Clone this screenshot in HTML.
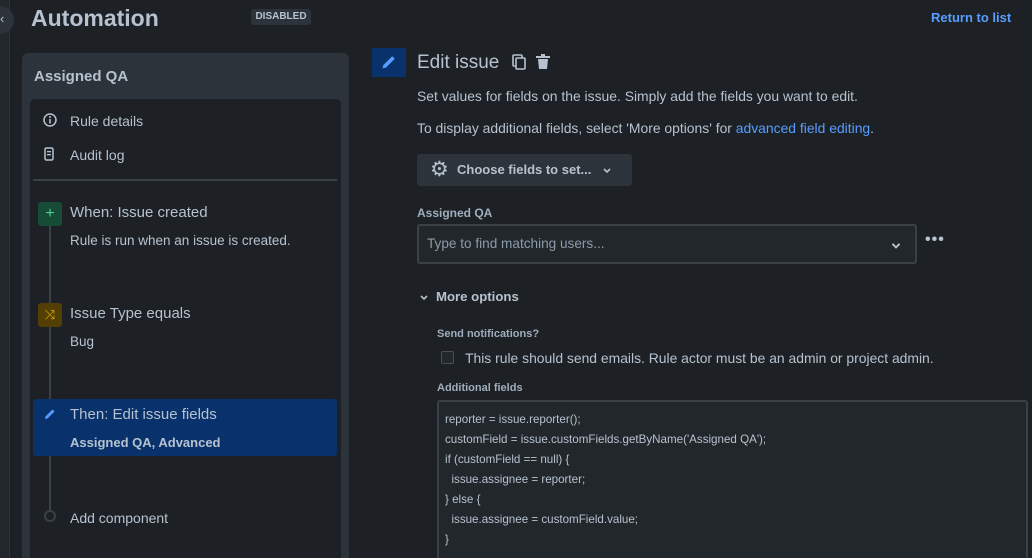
<!DOCTYPE html>
<html><head><style>
*{box-sizing:border-box;margin:0;padding:0}
html{width:1032px;height:558px;overflow:hidden}
body{width:1032px;height:558px;background:#1d2125;font-family:"Liberation Sans",sans-serif;color:#b6c2cf;position:relative;overflow:hidden;font-size:14px}
.a{position:absolute}
</style></head><body>
<div class="a" style="left:0;top:0;width:10px;height:558px;background:#22272b;border-right:1px solid #2c333a"></div>
<div class="a" style="left:-14px;top:6px;width:28px;height:28px;border-radius:50%;background:#2c333a"></div>
<div class="a" style="left:0;top:11px;font-size:13px;color:#b6c2cf">‹</div>
<div class="a" style="left:31px;top:5px;font-size:23px;font-weight:bold;color:#b6c2cf">Automation</div>
<div class="a" style="left:251px;top:9px;width:60px;height:16px;background:#2c333a;border-radius:3px;font-size:10px;font-weight:bold;text-align:center;line-height:16px;color:#b6c2cf">DISABLED</div>
<div class="a" style="left:931px;top:10px;font-size:13px;font-weight:bold;color:#579dff">Return to list</div>

<div class="a" style="left:22px;top:53px;width:327px;height:505px;background:#2c333a;border-radius:6px 6px 0 0"></div>
<div class="a" style="left:34px;top:68px;font-size:15px;font-weight:bold;color:#b6c2cf">Assigned QA</div>
<div class="a" style="left:30px;top:99px;width:311px;height:459px;background:#1d2125;border-radius:5px 5px 0 0"></div>
<svg class="a" style="left:42px;top:112px" width="16" height="16" viewBox="0 0 16 16"><circle cx="8" cy="8" r="6" fill="none" stroke="#b6c2cf" stroke-width="1.5"/><rect x="7.2" y="7" width="1.6" height="4.5" fill="#b6c2cf"/><circle cx="8" cy="5" r="1" fill="#b6c2cf"/></svg>
<div class="a" style="left:70px;top:113px;font-size:14px">Rule details</div>
<svg class="a" style="left:44px;top:147px" width="12" height="14" viewBox="0 0 12 14"><rect x="1" y="1" width="8" height="12" rx="1.5" fill="none" stroke="#b6c2cf" stroke-width="1.5"/><rect x="3" y="4" width="4" height="1.3" fill="#b6c2cf"/><rect x="3" y="7" width="4" height="1.3" fill="#b6c2cf"/></svg>
<div class="a" style="left:70px;top:147px;font-size:14px">Audit log</div>
<div class="a" style="left:33px;top:179px;width:304px;height:2px;background:#384048"></div>

<div class="a" style="left:49px;top:215px;width:2px;height:295px;background:#384048"></div>
<div class="a" style="left:38px;top:202px;width:24px;height:24px;background:#164b35;border-radius:3px;color:#4bce97;text-align:center;line-height:24px;font-size:16px">+</div>
<div class="a" style="left:70px;top:204px;font-size:15px">When: Issue created</div>
<div class="a" style="left:70px;top:233px;font-size:13.5px">Rule is run when an issue is created.</div>
<div class="a" style="left:38px;top:303px;width:24px;height:24px;background:#533f04;border-radius:3px;color:#e2b203;text-align:center;line-height:24px;font-size:13px">⤨</div>
<div class="a" style="left:70px;top:305px;font-size:15px">Issue Type equals</div>
<div class="a" style="left:70px;top:334px;font-size:13.5px">Bug</div>
<div class="a" style="left:33px;top:399px;width:304px;height:57px;background:#09326c;border-radius:3px"></div>
<svg class="a" style="left:43px;top:407px" width="14" height="14" viewBox="0 0 14 14"><path d="M2 12 L2.6 9.4 L9.5 2.5 L11.5 4.5 L4.6 11.4 Z" fill="#579dff"/></svg>
<div class="a" style="left:70px;top:406px;font-size:15px">Then: Edit issue fields</div>
<div class="a" style="left:70px;top:435px;font-size:13px;font-weight:bold">Assigned QA, Advanced</div>
<div class="a" style="left:44px;top:510px;width:12px;height:12px;border-radius:50%;border:2px solid #384048;background:#1d2125"></div>
<div class="a" style="left:70px;top:510px;font-size:14px">Add component</div>

<div class="a" style="left:372px;top:48px;width:34px;height:29px;background:#09326c"></div>
<svg class="a" style="left:380px;top:53px" width="18" height="18" viewBox="0 0 14 14"><path d="M2 12 L2.6 9.4 L9.5 2.5 L11.5 4.5 L4.6 11.4 Z" fill="#579dff"/></svg>
<div class="a" style="left:417px;top:52px;font-size:19px;color:#b6c2cf">Edit issue</div>
<svg class="a" style="left:510px;top:53px" width="18" height="18" viewBox="0 0 18 18"><rect x="3" y="2" width="9" height="11" rx="1" fill="none" stroke="#b6c2cf" stroke-width="1.6"/><rect x="6" y="5" width="9" height="11" rx="1" fill="#1d2125" stroke="#b6c2cf" stroke-width="1.6"/></svg>
<svg class="a" style="left:534px;top:53px" width="18" height="18" viewBox="0 0 18 18"><rect x="2" y="3" width="14" height="2" fill="#b6c2cf"/><rect x="7" y="1" width="4" height="2" fill="#b6c2cf"/><path d="M4 6 H14 L13 16 H5 Z" fill="#b6c2cf"/></svg>
<div class="a" style="left:417px;top:88px;font-size:13.9px">Set values for fields on the issue. Simply add the fields you want to edit.</div>
<div class="a" style="left:417px;top:120px;font-size:13.9px">To display additional fields, select 'More options' for <span style="color:#579dff">advanced field editing</span>.</div>
<div class="a" style="left:417px;top:154px;width:215px;height:32px;background:#2c333a;border-radius:3px"></div>
<div class="a" style="left:430px;top:157px;font-size:21px;color:#b6c2cf">⚙</div>
<div class="a" style="left:457px;top:162px;font-size:13px;font-weight:bold">Choose fields to set...</div>
<svg class="a" style="left:602px;top:165px" width="10" height="10" viewBox="0 0 10 10"><path d="M2 4 L5 7 L8 4" fill="none" stroke="#b6c2cf" stroke-width="1.6"/></svg>
<div class="a" style="left:417px;top:206px;font-size:12px;font-weight:bold;color:#9fadbc">Assigned QA</div>
<div class="a" style="left:417px;top:224px;width:500px;height:40px;background:#22272b;border:2px solid #384048;border-radius:3px"></div>
<div class="a" style="left:427px;top:236px;font-size:13.6px;color:#8c9bab">Type to find matching users...</div>
<svg class="a" style="left:890px;top:239px" width="12" height="12" viewBox="0 0 10 10"><path d="M2 4 L5 7 L8 4" fill="none" stroke="#b6c2cf" stroke-width="1.6"/></svg>
<div class="a" style="left:925px;top:231px;font-size:16px;font-weight:bold;letter-spacing:1px">•••</div>
<svg class="a" style="left:419px;top:292px" width="10" height="10" viewBox="0 0 10 10"><path d="M2 4 L5 7 L8 4" fill="none" stroke="#b6c2cf" stroke-width="1.6"/></svg>
<div class="a" style="left:436px;top:289px;font-size:13.2px;font-weight:bold">More options</div>
<div class="a" style="left:437px;top:328px;font-size:11px;font-weight:bold;color:#9fadbc">Send notifications?</div>
<div class="a" style="left:441px;top:351px;width:13px;height:13px;border:1.5px solid #454f59;border-radius:2px;background:#22272b"></div>
<div class="a" style="left:465px;top:350px;font-size:13.9px">This rule should send emails. Rule actor must be an admin or project admin.</div>
<div class="a" style="left:437px;top:382px;font-size:11px;font-weight:bold;color:#9fadbc">Additional fields</div>
<div class="a" style="left:437px;top:400px;width:591px;height:170px;background:#22272b;border:2px solid #384048;border-radius:3px"></div>
<div class="a" style="left:445px;top:410px;font-size:11.6px;line-height:20px;white-space:pre;color:#b6c2cf">reporter = issue.reporter();
customField = issue.customFields.getByName('Assigned QA');
if (customField == null) {
  issue.assignee = reporter;
} else {
  issue.assignee = customField.value;
}</div>
</body></html>
